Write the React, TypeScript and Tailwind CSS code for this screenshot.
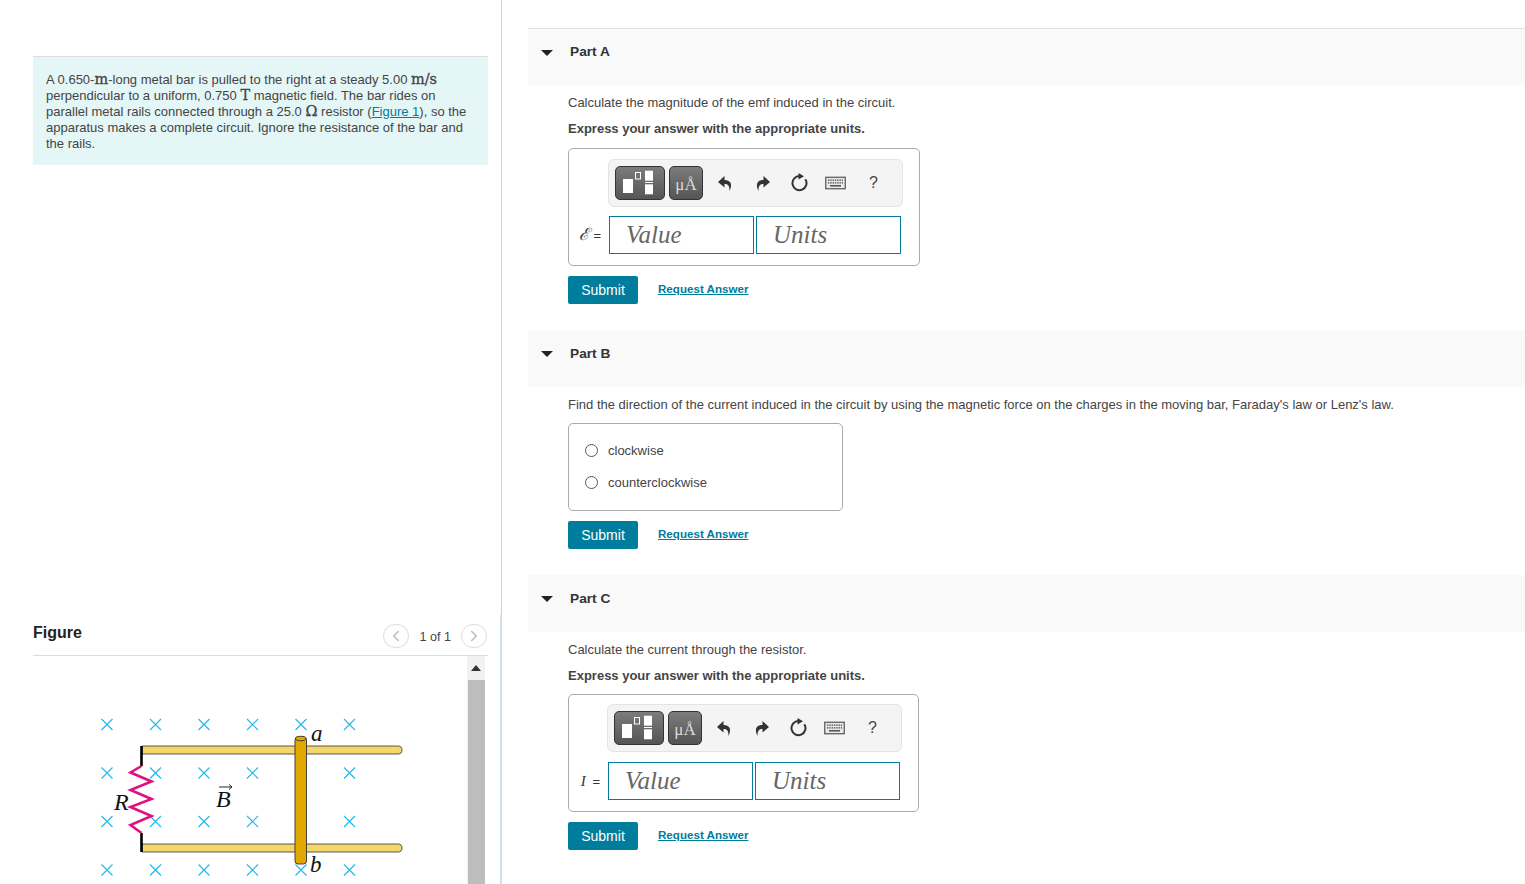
import { ChevronLeft, ChevronRight } from 'lucide-react';

const sans = { fontFamily: '"Liberation Sans", Arial, sans-serif' };
const serifFont = { fontFamily: '"Liberation Serif", serif' };

function Caret() {
  return <div className="-mt-[9px] w-0 h-0 border-l-[6px] border-r-[6px] border-t-[6px] border-l-transparent border-r-transparent border-t-[#222]" />;
}

function PartHeader({ name, border }: { name: string; border?: boolean }) {
  return (
    <div className={`h-[57px] bg-[#f9f9f9] flex items-center pl-[13px] ${border ? 'border-t border-[#e2e2e2]' : ''}`}>
      <Caret />
      <span className="ml-[17px] text-[13.7px] font-bold text-[#333] -mt-[9px]">{name}</span>
    </div>
  );
}

function Reply({ flip }: { flip?: boolean }) {
  return (
    <svg width="16" height="17" viewBox="0 0 16 17" className={flip ? '-scale-x-100' : ''}>
      <path d="M7.5 1 L1 7 L7.5 12.5 V9 C11 9 12.5 10.5 12.5 16 C15.5 10 14.5 5 7.5 5 Z" fill="#333" />
    </svg>
  );
}

function Redo() {
  return (
    <svg width="18" height="20" viewBox="0 0 18 20">
      <path d="M15.3 6.2 A7 7 0 1 1 9.5 3.1" stroke="#333" strokeWidth="2" fill="none" />
      <path d="M8.5 0 L14 3.2 L8.5 6.4 Z" fill="#333" />
    </svg>
  );
}

function Keyboard() {
  return (
    <svg width="21" height="14" viewBox="0 0 21 14">
      <rect x="0.75" y="1.25" width="19.5" height="11.5" fill="#e8e8e8" stroke="#555" strokeWidth="1.2" />
      <path d="M3 4.2H18M3 6.8H18" stroke="#444" strokeWidth="1.3" strokeDasharray="1.4 0.9" />
      <path d="M5 9.8H16" stroke="#444" strokeWidth="1.4" />
    </svg>
  );
}

function Toolbar() {
  return (
    <div className="w-[295px] h-[48px] bg-[#f4f4f4] border border-[#e4e4e4] rounded-[6px] flex items-center pl-[6px]">
      <div className="w-[50px] h-[34px] rounded-[5px] border border-[#333] bg-gradient-to-b from-[#7c7c7c] to-[#555] flex items-center justify-center">
        <svg width="34" height="28" viewBox="0 0 34 28">
          <rect x="0" y="10" width="10" height="14" fill="#fff" />
          <rect x="12.5" y="3.5" width="5" height="6.5" fill="none" stroke="#fff" strokeWidth="1" />
          <rect x="22" y="1.7" width="8" height="10" fill="#fff" />
          <rect x="22" y="13" width="8" height="1" fill="#fff" />
          <rect x="22" y="15.3" width="8" height="10" fill="#fff" />
        </svg>
      </div>
      <div className="ml-[4px] w-[34px] h-[34px] rounded-[5px] border border-[#333] bg-gradient-to-b from-[#7c7c7c] to-[#555] flex items-center justify-center text-[#dcdcdc] text-[17px] pt-[3px]" style={serifFont}>
        μÅ
      </div>
      <div className="ml-[14px]"><Reply /></div>
      <div className="ml-[22px]"><Reply flip /></div>
      <div className="ml-[19px]"><Redo /></div>
      <div className="ml-[17px]"><Keyboard /></div>
      <span className="ml-[23px] text-[16px] text-[#444]">?</span>
    </div>
  );
}

function AnswerBox({ symbol, wide }: { symbol: string; wide?: boolean }) {
  return (
    <div className={`${wide ? 'w-[352px] pt-[10px]' : 'w-[351px] pt-[9px]'} h-[118px] border border-[#aaa] rounded-[5px] flex flex-col`}>
      <div className={wide ? 'pl-[39px]' : 'pl-[38px]'}><Toolbar /></div>
      <div className={`flex items-center ${wide ? 'mt-[9px]' : 'mt-[10px]'}`}>
        <div className={`${wide ? 'w-[40px]' : 'w-[39px]'} text-right pr-[8px] text-[13px] text-[#333] whitespace-nowrap`}>
          <span className={`italic ${wide ? 'text-[17px] mr-[1px]' : 'text-[15px] mr-[3px]'}`} style={{ fontFamily: '"Liberation Serif", "DejaVu Serif", serif' }}>{symbol}</span> =
        </div>
        <div className="w-[145px] h-[38px] border border-[#007c9c] pl-[16px] flex items-center text-[25px] italic text-[#666]" style={serifFont}>Value</div>
        <div className="ml-[2px] w-[145px] h-[38px] border border-[#007c9c] pl-[16px] flex items-center text-[25px] italic text-[#666]" style={serifFont}>Units</div>
      </div>
    </div>
  );
}

function Actions() {
  return (
    <div className="flex items-center">
      <div className="w-[70px] h-[28px] bg-[#007c9c] rounded-[2px] text-white text-[14px] flex items-center justify-center">Submit</div>
      <a className="ml-[20px] -mt-[3px] text-[11.6px] font-bold text-[#007c9c] underline">Request Answer</a>
    </div>
  );
}

function Radio({ label }: { label: string }) {
  return (
    <div className="flex items-center h-[32px] pl-[16px]">
      <div className="w-[13px] h-[13px] rounded-full border border-[#555] bg-white" />
      <span className="ml-[10px] mt-[1px] text-[13px] text-[#444]">{label}</span>
    </div>
  );
}

const Mth = ({ children }: { children: string }) => (
  <span className="text-[14.5px] leading-[0] text-[#444] [-webkit-text-stroke:0.3px_#444]" style={{ fontFamily: '"DejaVu Serif", serif' }}>{children}</span>
);

function Circuit() {
  const xs = [107, 155.5, 204, 252.5, 301, 349.5];
  const ys = [724.5, 773, 821.5, 870];
  const serif = '"Liberation Serif", serif';
  return (
    <svg width="434" height="228" viewBox="33 656 434 228" className="block">
      {ys.map(y => xs.map(x => (x === 301 && (y === 773 || y === 821.5)) ? null : (
        <path key={`${x}-${y}`} d={`M${x - 5.5} ${y - 5.5}L${x + 5.5} ${y + 5.5}M${x + 5.5} ${y - 5.5}L${x - 5.5} ${y + 5.5}`} stroke="#25b8ec" strokeWidth="1.2" fill="none" />
      )))}
      <path d="M142 746H398a3.5 3.5 0 0 1 0 8H142Z" fill="#f3d66c" stroke="#333" strokeWidth="0.8" />
      <path d="M142 844H398a3.5 3.5 0 0 1 0 8H142Z" fill="#f3d66c" stroke="#333" strokeWidth="0.8" />
      <path d="M141.5 746V766M141.5 833V852" stroke="#000" strokeWidth="2.6" fill="none" />
      <path d="M141.5 766L130.5 772.5L151.5 781.5L130.5 790L151.5 799L130.5 807L151.5 816L130.5 825L141.5 833" stroke="#e2107f" strokeWidth="2.6" fill="none" />
      <rect x="295" y="737" width="11.5" height="127" rx="3" fill="#e0a800" stroke="#333" strokeWidth="0.9" />
      <ellipse cx="300.7" cy="738.5" rx="5.2" ry="2.2" fill="#e0a800" stroke="#333" strokeWidth="0.9" />
      <text x="311" y="741" fontSize="23" fontStyle="italic" fontFamily={serif} fill="#111">a</text>
      <text x="310" y="872" fontSize="23" fontStyle="italic" fontFamily={serif} fill="#111">b</text>
      <text x="114" y="810" fontSize="24" fontStyle="italic" fontFamily={serif} fill="#111">R</text>
      <text x="216" y="807" fontSize="24" fontStyle="italic" fontFamily={serif} fill="#111">B</text>
      <path d="M219 787H232M229 784.5L232 787L229 789.5" stroke="#111" strokeWidth="0.9" fill="none" />
    </svg>
  );
}

export default function App() {
  return (
    <div className="h-[884px] w-[1525px] overflow-hidden bg-white flex text-[#444]" style={sans}>
      {/* problem + figure column */}
      <div className="w-[500px] shrink-0 h-full pl-[33px] flex flex-col">
        <div className="mt-[56px] w-[455px] h-[109px] bg-[#e5f6f7] border-t border-[#dcdcdc] pl-[13px] pt-[15px] text-[13px] leading-[16px] text-[#444] whitespace-nowrap">
          A 0.650-<Mth>m</Mth>-long metal bar is pulled to the right at a steady 5.00 <Mth>m/s</Mth><br />
          perpendicular to a uniform, 0.750 <Mth>T</Mth> magnetic field. The bar rides on<br />
          parallel metal rails connected through a 25.0 <Mth>Ω</Mth> resistor (<a className="text-[#007c9c] underline">Figure 1</a>), so the<br />
          apparatus makes a complete circuit. Ignore the resistance of the bar and<br />
          the rails.
        </div>
        <div className="mt-[450px] w-[455px] h-[41px] border-b border-[#dcdcdc] flex items-start">
          <span className="mt-[6px] text-[16px] font-bold text-[#222]">Figure</span>
          <div className="ml-auto flex items-center mt-[9px] mr-[1px]">
            <div className="w-[26px] h-[24px] rounded-full border border-[#ddd] flex items-center justify-center"><ChevronLeft size={18} className="text-[#bbb]" /></div>
            <span className="mx-[10px] mt-[2px] text-[12.6px] text-[#444]">1 of 1</span>
            <div className="w-[26px] h-[24px] rounded-full border border-[#ddd] flex items-center justify-center"><ChevronRight size={18} className="text-[#bbb]" /></div>
          </div>
        </div>
        <div className="flex w-[452px]">
          <div className="w-[434px]"><Circuit /></div>
          <div className="w-[18px] h-[228px] bg-[#f1f1f1] flex flex-col items-center">
            <div className="mt-[9px] w-0 h-0 border-l-[5px] border-r-[5px] border-b-[6px] border-l-transparent border-r-transparent border-b-[#333]" />
            <div className="mt-[9px] w-[17px] flex-1 bg-[#bdbdbd]" />
          </div>
        </div>
      </div>

      {/* divider */}
      <div className="w-[2px] shrink-0 h-full flex flex-col">
        <div className="h-[615px] w-[1px] ml-[1px] bg-[#d0d0d0]" />
        <div className="flex-1 w-[2px] bg-[#cfe0ee]" />
      </div>

      {/* parts column */}
      <div className="flex-1 pl-[26px] pt-[28px]">
        <PartHeader name="Part A" border />
        <div className="pl-[40px]">
          <p className="mt-[10px] h-[16px] leading-[16px] text-[13px]">Calculate the magnitude of the emf induced in the circuit.</p>
          <p className="mt-[10px] h-[16px] leading-[16px] text-[13px] font-bold">Express your answer with the appropriate units.</p>
          <div className="mt-[11px]"><AnswerBox symbol="ℰ" wide /></div>
          <div className="mt-[10px]"><Actions /></div>
        </div>

        <div className="mt-[26px]"><PartHeader name="Part B" /></div>
        <div className="pl-[40px]">
          <p className="mt-[10px] h-[16px] leading-[16px] text-[13px]">Find the direction of the current induced in the circuit by using the magnetic force on the charges in the moving bar, Faraday's law or Lenz's law.</p>
          <div className="mt-[10px] w-[275px] h-[88px] border border-[#aaa] rounded-[5px] pt-[10px]">
            <Radio label="clockwise" />
            <Radio label="counterclockwise" />
          </div>
          <div className="mt-[10px]"><Actions /></div>
        </div>

        <div className="mt-[26px]"><PartHeader name="Part C" /></div>
        <div className="pl-[40px]">
          <p className="mt-[10px] h-[16px] leading-[16px] text-[13px]">Calculate the current through the resistor.</p>
          <p className="mt-[10px] h-[16px] leading-[16px] text-[13px] font-bold">Express your answer with the appropriate units.</p>
          <div className="mt-[10px]"><AnswerBox symbol="I" /></div>
          <div className="mt-[10px]"><Actions /></div>
        </div>
      </div>
    </div>
  );
}
